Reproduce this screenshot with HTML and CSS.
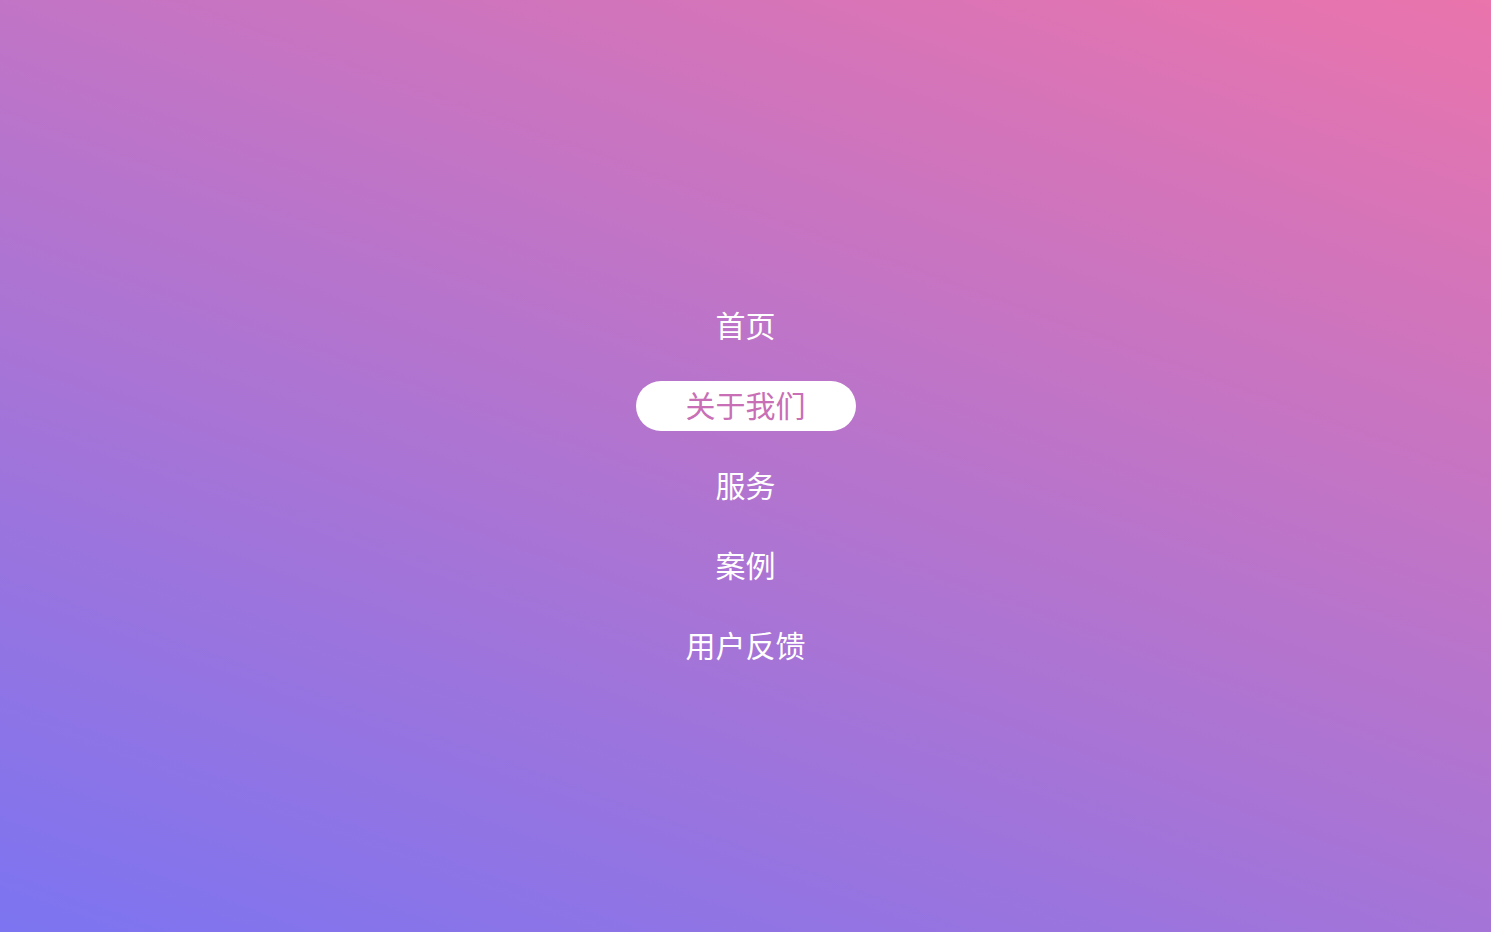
FILE: index.html
```html
<!DOCTYPE html>
<html lang="zh-CN">
<head>
<meta charset="utf-8">
<title>导航</title>
<link rel="stylesheet" href="styles.css">
</head>
<body>
<nav class="menu">
  <ul class="menu-list">
    <li class="menu-item"><a href="#" class="menu-link">首页</a></li>
    <li class="menu-item"><a href="#" class="menu-link active">关于我们</a></li>
    <li class="menu-item"><a href="#" class="menu-link">服务</a></li>
    <li class="menu-item"><a href="#" class="menu-link">案例</a></li>
    <li class="menu-item"><a href="#" class="menu-link">用户反馈</a></li>
  </ul>
</nav>
</body>
</html>
```
FILE: styles.css
```css
html, body {
  margin: 0;
  padding: 0;
  height: 100%;
}
body {
  min-height: 100vh;
  background: linear-gradient(20deg, #7c74f1 0%, #ea74ac 100%);
  display: flex;
  align-items: center;
  justify-content: center;
  font-family: "Noto Sans CJK SC", "Noto Sans", sans-serif;
}
.menu {
  padding-top: 40px;
}
.menu-list {
  list-style: none;
  margin: 0;
  padding: 0;
  display: flex;
  flex-direction: column;
  align-items: center;
  gap: 30px;
}
.menu-item {
  width: 220px;
  height: 50px;
}
.menu-link {
  box-sizing: border-box;
  display: flex;
  align-items: center;
  justify-content: center;
  width: 100%;
  height: 100%;
  padding-bottom: 4px;
  border-radius: 25px;
  color: #ffffff;
  text-decoration: none;
  font-size: 30px;
  font-weight: 400;
  line-height: 1;
}
.menu-link.active {
  background: #ffffff;
  color: #c86fb6;
}
```
